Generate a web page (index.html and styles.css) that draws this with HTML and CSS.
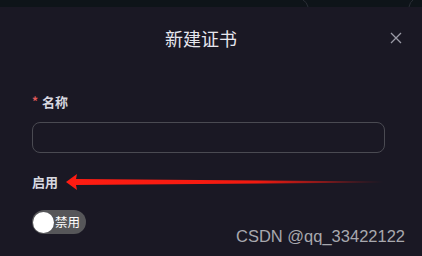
FILE: index.html
```html
<!DOCTYPE html>
<html>
<head>
<meta charset="utf-8">
<link rel="stylesheet" href="styles.css">
</head>
<body>
<div class="topbar">
  <svg width="422" height="7" viewBox="0 0 422 7"><path d="M303 0 Q307 2 308 7 M413 0 Q410 2 409 7" stroke="#2a2e36" stroke-width="1" fill="none"/></svg>
</div>
<div class="dialog">
  <div class="header">
    <div class="title">新建证书</div>
    <div class="close">
      <svg width="12" height="12" viewBox="0 0 12 12"><path d="M1 1L11 11M11 1L1 11" stroke="#9a9aa6" stroke-width="1.3" fill="none"/></svg>
    </div>
  </div>
  <div class="body">
    <div class="label"><span class="req">*</span>名称</div>
    <div class="input"></div>
    <div class="label-row">
      <div class="label plain">启用</div>
      <svg class="arrow" width="320" height="18" viewBox="0 0 320 18">
        <defs>
          <linearGradient id="g" x1="0" y1="0" x2="1" y2="0">
            <stop offset="0" stop-color="#ff1c12"/>
            <stop offset="0.6" stop-color="#f21a10"/>
            <stop offset="1" stop-color="#ff1a12" stop-opacity="0"/>
          </linearGradient>
        </defs>
        <path d="M0 9 L11 1 L10 6 L318 8.4 L318 9.6 L10 12 L11 17 Z" fill="url(#g)"/>
      </svg>
    </div>
    <div class="switch"><span class="knob"></span><span class="switch-text">禁用</span></div>
  </div>
</div>
<div class="watermark">CSDN @qq_33422122</div>
</body>
</html>
```
FILE: styles.css
```css
html, body {
  margin: 0;
  padding: 0;
  background: #1a1824;
  width: 422px;
  height: 256px;
  overflow: hidden;
  font-family: "Noto Sans CJK SC", "Liberation Sans", sans-serif;
  position: relative;
}
.topbar {
  height: 7px;
  background: #0e1419;
}
.topbar svg {
  display: block;
}
.dialog {
  padding: 0 32px;
}
.header {
  height: 62px;
  display: flex;
  align-items: center;
  justify-content: center;
  position: relative;
}
.title {
  color: #e6e6ee;
  font-size: 18px;
  line-height: 24px;
  margin-top: -1px;
  margin-right: 20px;
}
.close {
  position: absolute;
  right: -12px;
  top: 25px;
  width: 12px;
  height: 12px;
  display: flex;
}
.body {
  padding-top: 24px;
}
.label {
  color: #d8d8e0;
  font-size: 13px;
  font-weight: 700;
  line-height: 18px;
  display: flex;
  align-items: center;
}
.req {
  color: #e05a5a;
  font-size: 12px;
  margin-right: 4px;
  margin-top: -2px;
}
.input {
  margin-top: 11px;
  height: 29px;
  border: 1px solid #4a4a52;
  border-radius: 8px;
  width: 351px;
}
.label-row {
  margin-top: 20px;
  display: flex;
  align-items: center;
  gap: 8px;
}
.arrow {
  display: block;
}
.switch {
  margin-top: 19px;
  width: 54px;
  height: 24px;
  border-radius: 12px;
  background: #565659;
  display: flex;
  align-items: center;
  padding-left: 1px;
  box-sizing: border-box;
}
.knob {
  width: 21px;
  height: 21px;
  border-radius: 50%;
  background: #ffffff;
}
.switch-text {
  color: #ffffff;
  font-size: 12.5px;
  margin-left: 1px;
  line-height: 16px;
}
.watermark {
  position: absolute;
  left: 236px;
  top: 226px;
  font-family: "Liberation Sans", sans-serif;
  font-size: 16.5px;
  color: #a8a8ae;
  line-height: 20px;
}
```
